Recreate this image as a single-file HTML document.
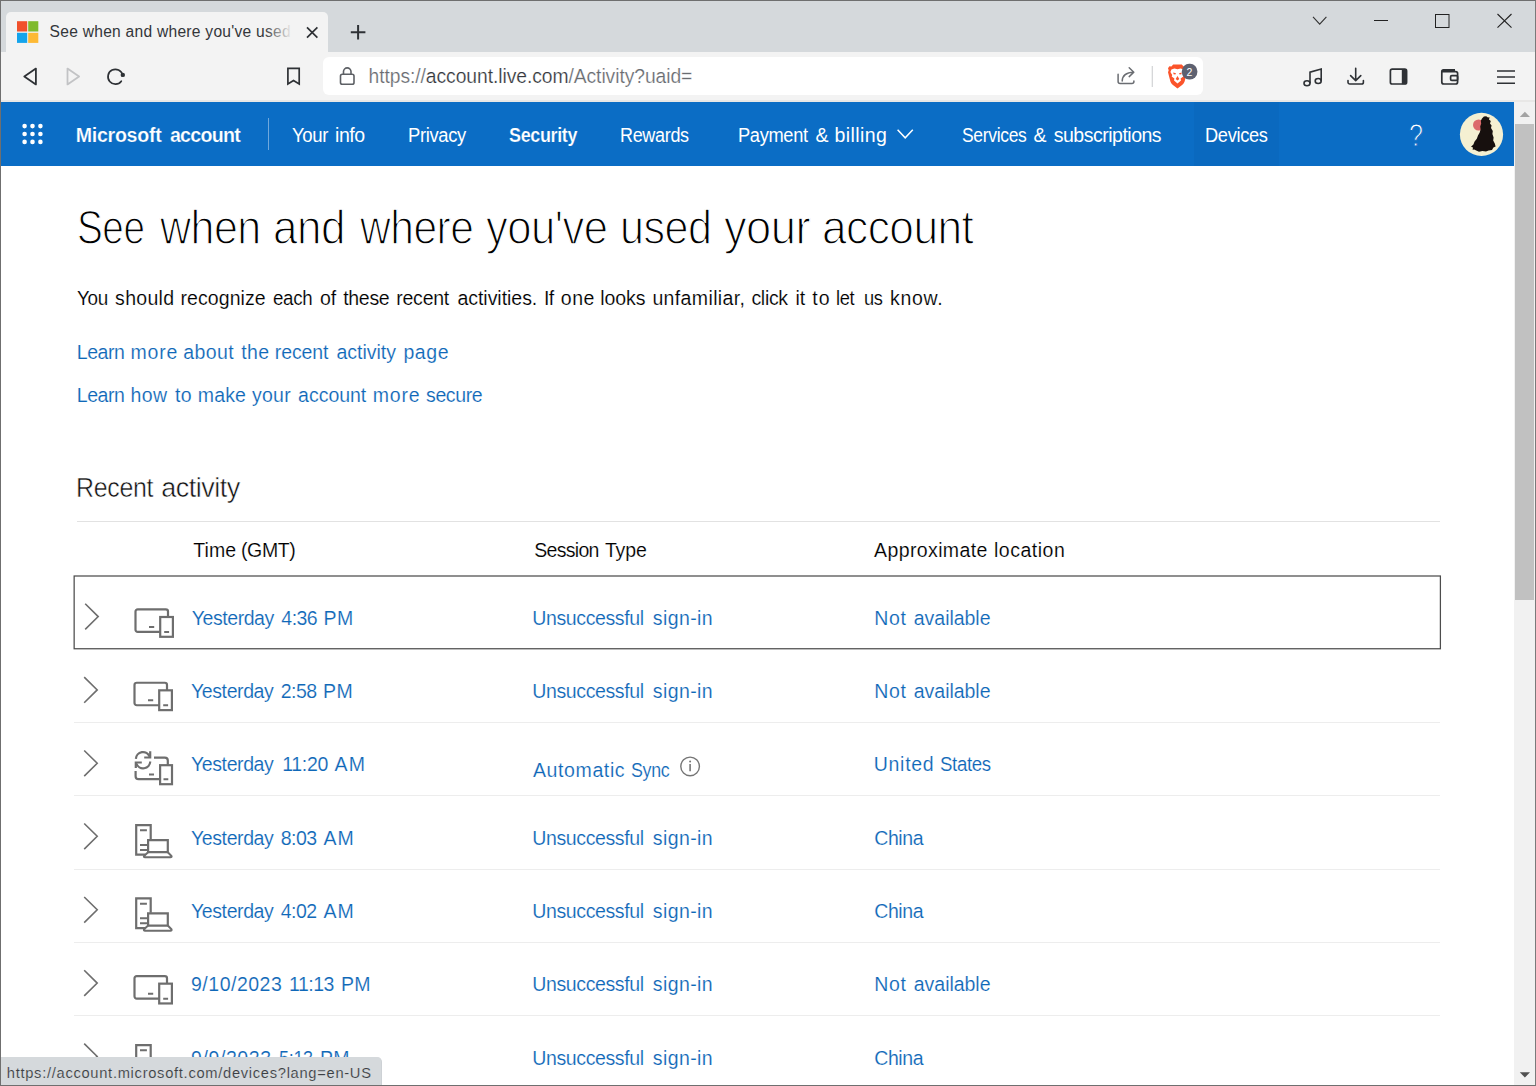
<!DOCTYPE html>
<html lang="en">
<head>
<meta charset="utf-8">
<title>See when and where you've used your account</title>
<style>
html,body{margin:0;padding:0;}
body{width:1536px;height:1086px;overflow:hidden;background:#fff;position:relative;font-family:"Liberation Sans",sans-serif;}
.a{position:absolute;}
.t{position:absolute;white-space:pre;}
#frame{left:0;top:0;width:1536px;height:1086px;box-sizing:border-box;border:1px solid #6f6f6f;border-right-color:#7a7a7a;z-index:50;pointer-events:none;}
#tabbar{left:0;top:0;width:1536px;height:52px;background:#d5d9dc;}
#tab{left:6px;top:12px;width:322px;height:40px;background:#f3f3f3;border-radius:5px 5px 0 0;}
#toolbar{left:0;top:52px;width:1536px;height:48px;background:#f3f3f3;border-bottom:2px solid #e8e7e6;}
#urlbox{left:323px;top:57px;width:880px;height:38px;background:#fff;border-radius:6px;}
#nav{left:1px;top:102px;width:1513px;height:64px;background:#0b6dc5;}
#navhover{left:1193.5px;top:102px;width:85px;height:64px;background:#0a69bf;}
#navsep{left:268px;top:118px;width:1px;height:32px;background:#6fa8dd;}
#sbtrack{left:1514px;top:102px;width:21px;height:983px;background:#f1f1f1;}
#sbthumb{left:1515px;top:124px;width:19px;height:476px;background:#c1c1c1;}
.hr{position:absolute;left:74px;width:1366px;height:1px;background:#ededed;}
#status{left:1px;top:1057px;width:381px;height:28px;background:#d5d9dc;border-top-right-radius:5px;border-right:1px solid #cdd1d5;box-sizing:border-box;}
svg{position:absolute;overflow:visible;}
</style>
</head>
<body>
<div class="a" id="tabbar"></div>
<div class="a" id="tab"></div>
<div class="a" id="toolbar"></div>
<div class="a" id="urlbox"></div>
<div class="a" id="nav"></div>
<div class="a" id="navhover"></div>
<div class="a" id="navsep"></div>
<div class="a" id="sbtrack"></div>
<div class="a" id="sbthumb"></div>
<svg width="1536" height="1086" viewBox="0 0 1536 1086" style="left:0;top:0">
<rect x="74.15" y="576" width="1366.25" height="72.75" fill="none" stroke="#4d4d4d" stroke-width="1.25"/>
<path d="M85.2 603.8 L98.2 616.6 L85.2 629.4" fill="none" stroke="#6e6e6e" stroke-width="1.6"/>
<path d="M84.2 677.1 L97.2 689.9 L84.2 702.7" fill="none" stroke="#6e6e6e" stroke-width="1.6"/>
<path d="M84.2 750.5 L97.2 763.3 L84.2 776.1" fill="none" stroke="#6e6e6e" stroke-width="1.6"/>
<path d="M84.2 823.5 L97.2 836.3 L84.2 849.1" fill="none" stroke="#6e6e6e" stroke-width="1.6"/>
<path d="M84.2 897.0 L97.2 909.8 L84.2 922.6" fill="none" stroke="#6e6e6e" stroke-width="1.6"/>
<path d="M84.2 970.3 L97.2 983.1 L84.2 995.9" fill="none" stroke="#6e6e6e" stroke-width="1.6"/>
<path d="M84.2 1043.6 L97.2 1056.4 L84.2 1069.2" fill="none" stroke="#6e6e6e" stroke-width="1.6"/>
<g transform="translate(0 0)" fill="none" stroke="#6e6e6e" stroke-width="2.2"><path d="M168 617 V611.6 a2.2 2.2 0 0 0 -2.2 -2.2 H137.7 a2.2 2.2 0 0 0 -2.2 2.2 V629.7 a2.2 2.2 0 0 0 2.2 2.2 H160"/><rect x="160.2" y="617" width="12.7" height="19.8"/><path d="M149 627 H154.2 M164.2 632 H169.1" stroke-width="2"/></g>
<g transform="translate(-1 73.33)" fill="none" stroke="#6e6e6e" stroke-width="2.2"><path d="M168 617 V611.6 a2.2 2.2 0 0 0 -2.2 -2.2 H137.7 a2.2 2.2 0 0 0 -2.2 2.2 V629.7 a2.2 2.2 0 0 0 2.2 2.2 H160"/><rect x="160.2" y="617" width="12.7" height="19.8"/><path d="M149 627 H154.2 M164.2 632 H169.1" stroke-width="2"/></g>
<g transform="translate(0 0)" fill="none" stroke="#6e6e6e" stroke-width="2.2"><path d="M154 757.6 H164.8 a3 3 0 0 1 3 3 V765"/><path d="M135.6 771 V776.2 a3 3 0 0 0 3 3 H160"/><rect x="160.1" y="765.2" width="11.9" height="19"/><path d="M149 774.6 H154 M163.5 779.2 H168.3" stroke-width="2"/><path d="M135.9 758.9 A7.1 7.1 0 0 1 149.6 756.6"/><path d="M150.2 761.4 A7.1 7.1 0 0 1 136.4 763.6"/><path d="M144.2 757.5 H150.2 V751.3" /><path d="M141.8 762.5 H135.8 V768" /></g>
<g transform="translate(0 0)" fill="none" stroke="#6e6e6e" stroke-width="2.2"><path d="M150.7 839.5 V825.1 H136.2 V854.7 H145.5"/><path d="M140 830.3 H146.9 M140 845 H147.4 M140 849.9 H147.4" stroke-width="2"/><path d="M148.1 852.2 V840.1 H167.8 V852.2 Z"/><path d="M148.1 852.2 L144 856 Q143.5 857.3 145 857.3 H170.5 Q172 857.3 171.5 856 L167.8 852.2" stroke-width="2"/></g>
<g transform="translate(0 73.33)" fill="none" stroke="#6e6e6e" stroke-width="2.2"><path d="M150.7 839.5 V825.1 H136.2 V854.7 H145.5"/><path d="M140 830.3 H146.9 M140 845 H147.4 M140 849.9 H147.4" stroke-width="2"/><path d="M148.1 852.2 V840.1 H167.8 V852.2 Z"/><path d="M148.1 852.2 L144 856 Q143.5 857.3 145 857.3 H170.5 Q172 857.3 171.5 856 L167.8 852.2" stroke-width="2"/></g>
<g transform="translate(-1 366.65)" fill="none" stroke="#6e6e6e" stroke-width="2.2"><path d="M168 617 V611.6 a2.2 2.2 0 0 0 -2.2 -2.2 H137.7 a2.2 2.2 0 0 0 -2.2 2.2 V629.7 a2.2 2.2 0 0 0 2.2 2.2 H160"/><rect x="160.2" y="617" width="12.7" height="19.8"/><path d="M149 627 H154.2 M164.2 632 H169.1" stroke-width="2"/></g>
<g transform="translate(0 219.99)" fill="none" stroke="#6e6e6e" stroke-width="2.2"><path d="M150.7 839.5 V825.1 H136.2 V854.7 H145.5"/><path d="M140 830.3 H146.9 M140 845 H147.4 M140 849.9 H147.4" stroke-width="2"/><path d="M148.1 852.2 V840.1 H167.8 V852.2 Z"/><path d="M148.1 852.2 L144 856 Q143.5 857.3 145 857.3 H170.5 Q172 857.3 171.5 856 L167.8 852.2" stroke-width="2"/></g>
<circle cx="690.1" cy="766.4" r="9.3" fill="none" stroke="#757575" stroke-width="1.4"/>
<path d="M690.1 763.9 V771.2" stroke="#757575" stroke-width="1.6"/><circle cx="690.1" cy="761.6" r="1" fill="#757575"/>
<circle cx="24.6" cy="126.1" r="2.3" fill="#fff"/>
<circle cx="24.6" cy="134" r="2.3" fill="#fff"/>
<circle cx="24.6" cy="141.9" r="2.3" fill="#fff"/>
<circle cx="32.5" cy="126.1" r="2.3" fill="#fff"/>
<circle cx="32.5" cy="134" r="2.3" fill="#fff"/>
<circle cx="32.5" cy="141.9" r="2.3" fill="#fff"/>
<circle cx="40.4" cy="126.1" r="2.3" fill="#fff"/>
<circle cx="40.4" cy="134" r="2.3" fill="#fff"/>
<circle cx="40.4" cy="141.9" r="2.3" fill="#fff"/>
<path d="M897.6 129.8 L905.2 137.8 L912.8 129.8" fill="none" stroke="#fff" stroke-width="1.5"/>
<circle cx="1481.5" cy="134.4" r="21.6" fill="#f5f0d2"/>
<circle cx="1478.6" cy="125" r="5.6" fill="#dc6a6c"/>
<path d="M1483.9 116.4 L1486.2 116.2 L1488 117.6 L1489.6 117.2 L1489 119.4 L1490.8 121 L1490 123.4 L1491.6 125.6 L1491 128 L1492.8 131 L1492.4 134 L1493.6 137.4 L1493.2 140.6 L1494.8 143.6 L1495.6 146.4 L1493.4 147.6 L1492 150 L1488.6 150.4 L1486 151.6 L1482.4 151 L1479 151.8 L1476.2 150.6 L1474.2 149.4 L1472.6 149.8 L1473 147.6 L1471 146.8 L1473.4 144.4 L1474.6 141.4 L1476.8 138.8 L1478 135.6 L1479.6 132.8 L1480.6 129.6 L1480.2 126.6 L1481.2 123.6 L1480.8 120.8 L1482 118.6 Z" fill="#17100e"/>
<rect x="17" y="21.2" width="10.2" height="10.3" fill="#f0502b"/><rect x="28.2" y="21.2" width="10.1" height="10.3" fill="#7fba2c"/><rect x="17" y="32.8" width="10.2" height="10.1" fill="#14a4ec"/><rect x="28.2" y="32.8" width="10.1" height="10.1" fill="#fdb934"/>
<path d="M307 27.4 L317.4 37.7 M317.4 27.4 L307 37.7" stroke="#2e3135" stroke-width="1.7" fill="none"/>
<path d="M350.8 32.2 H365.4 M358.1 24.9 V39.5" stroke="#2e3135" stroke-width="2" fill="none"/>
<path d="M1313 16.8 L1319.7 24.2 L1326.4 16.8" stroke="#333" stroke-width="1.1" fill="none"/>
<path d="M1374 20.5 H1388" stroke="#222" stroke-width="1"/>
<rect x="1435.5" y="14.5" width="13.5" height="13" stroke="#222" stroke-width="1" fill="none"/>
<path d="M1497.5 14 L1511.5 27.7 M1511.5 14 L1497.5 27.7" stroke="#222" stroke-width="1.1" fill="none"/>
<path d="M24.3 76.5 L35.9 68.6 V84.4 Z" stroke="#2e3135" stroke-width="1.8" fill="none" stroke-linejoin="round"/>
<path d="M79.1 76.5 L67.5 68.6 V84.4 Z" stroke="#c2c3c5" stroke-width="1.8" fill="none" stroke-linejoin="round"/>
<path d="M122.6 75 A7.4 7.4 0 1 0 121.3 81.2" stroke="#2e3135" stroke-width="1.7" fill="none" stroke-linecap="round"/><circle cx="122.8" cy="74.9" r="2.2" fill="#2e3135"/>
<path d="M287.9 68.3 H299.2 V84 L293.5 80.6 L287.9 84 Z" stroke="#2e3135" stroke-width="1.7" fill="none" stroke-linejoin="miter"/>
<rect x="340.5" y="74.3" width="13.5" height="9.9" rx="1.8" stroke="#5d6065" stroke-width="1.6" fill="none"/><path d="M343.5 74.3 V71.6 a3.75 3.75 0 0 1 7.5 0 V74.3" stroke="#5d6065" stroke-width="1.6" fill="none"/>
<path d="M1118.1 74.2 V81.5 a2 2 0 0 0 2 2 H1131.9 a2 2 0 0 0 2 -2 V81" stroke="#6a6d72" stroke-width="1.5" fill="none" stroke-linecap="round"/>
<path d="M1122.2 81 Q1122.5 72.5 1133.6 72.2 M1129.2 67.8 L1133.8 72.2 L1129.2 76.6" stroke="#6a6d72" stroke-width="1.5" fill="none" stroke-linecap="round" stroke-linejoin="round"/>
<path d="M1152.3 66 V87" stroke="#d2d3d5" stroke-width="1.2"/>
<path d="M1177.5 64.6 L1181.8 64.6 L1183.6 66.6 L1185.6 66.2 L1187 68.2 L1186.3 70.2 L1187 72.2 L1184.6 81.6 Q1184 83.6 1182.4 84.8 L1177.5 88.6 L1172.6 84.8 Q1171 83.6 1170.4 81.6 L1168 72.2 L1168.7 70.2 L1168 68.2 L1169.4 66.2 L1171.4 66.6 L1173.2 64.6 Z" fill="#fb542b"/>
<path d="M1177.5 69.2 L1180.6 68.6 L1183.6 69.6 L1184.6 72 L1182.8 75 L1183.3 76.6 L1180.6 78.6 L1181 80.4 L1177.5 83.4 L1174 80.4 L1174.4 78.6 L1171.7 76.6 L1172.2 75 L1170.4 72 L1171.4 69.6 L1174.4 68.6 Z" fill="#fff"/>
<path d="M1173.2 72.4 L1176 73.2 L1175.4 74.6 L1173.6 74.2 Z M1181.8 72.4 L1179 73.2 L1179.6 74.6 L1181.4 74.2 Z M1177.5 76 L1179.3 79 L1177.5 80.4 L1175.7 79 Z" fill="#fb542b"/>
<rect x="1181.8" y="63.8" width="15.6" height="15.6" rx="7.4" fill="#5e6170"/>
<g stroke="#2e3135" stroke-width="1.6" fill="none"><ellipse cx="1307" cy="83.2" rx="3" ry="2.5"/><ellipse cx="1318.2" cy="81" rx="3" ry="2.5"/><path d="M1310 83.2 V72.2 L1321.2 69 V81"/></g>
<path d="M1355.7 68.2 V80.4 M1350.6 75.6 L1355.7 80.6 L1360.8 75.6 M1348 80.6 V82.2 a1.8 1.8 0 0 0 1.8 1.8 H1361.6 a1.8 1.8 0 0 0 1.8 -1.8 V80.6" stroke="#2e3135" stroke-width="1.6" fill="none" stroke-linecap="round" stroke-linejoin="round"/>
<rect x="1390.4" y="69.1" width="16.2" height="14.9" rx="1.8" stroke="#2e3135" stroke-width="1.7" fill="none"/><path d="M1401.8 69 H1405 a1.8 1.8 0 0 1 1.8 1.8 V82.4 a1.8 1.8 0 0 1 -1.8 1.8 H1401.8 Z" fill="#2e3135"/>
<g stroke="#2e3135" stroke-width="1.7" fill="none"><path d="M1441.8 71.6 V82 a2 2 0 0 0 2 2 H1455.6 a2 2 0 0 0 2 -2 V73.6 a2 2 0 0 0 -2 -2 H1441.8 a1.6 1.6 0 0 1 1.6 -1.7 H1455"/><rect x="1450.6" y="75.6" width="7" height="4.8" rx="1.2"/></g>
<path d="M1497 70.9 H1515 M1497 77.1 H1515 M1497 83.2 H1515" stroke="#2e3135" stroke-width="1.5"/>
<path d="M1519.8 117 L1524.9 111.7 L1530 117 Z" fill="#a3a3a3"/>
<path d="M1519.8 1072.2 L1530 1072.2 L1524.9 1077.4 Z" fill="#505050"/>
</svg>
<div class="hr" style="top:521px;left:77px;width:1363px;background:#e2e2e2"></div>
<div class="hr" style="top:722px"></div>
<div class="hr" style="top:795px"></div>
<div class="hr" style="top:869px"></div>
<div class="hr" style="top:942px"></div>
<div class="hr" style="top:1015px"></div>
<div><span class="t" style="left:49.60px;top:24.00px;font-size:15.6px;line-height:15.6px;color:#33363a;letter-spacing:0.258px;">See when and where you've used</span></div>
<div><span class="t" style="left:368.50px;top:67.00px;font-size:19.3px;line-height:19.3px;color:#696c71;letter-spacing:-0.065px;-webkit-text-stroke:0.2px #fff;">https://<span style="color:#36393e">account.live.com</span>/Activity?uaid=</span></div>
<div><span class="t" style="left:75.70px;top:126.00px;font-size:19.6px;line-height:19.6px;color:#fff;letter-spacing:-0.268px;font-weight:700;-webkit-text-stroke:0.2px #0b6dc5;">Microsoft</span> <span class="t" style="left:169.90px;top:126.00px;font-size:19.6px;line-height:19.6px;color:#fff;letter-spacing:-0.717px;font-weight:700;-webkit-text-stroke:0.2px #0b6dc5;">account</span></div>
<div><span class="t" style="left:291.70px;top:126.00px;font-size:19.5px;line-height:19.5px;color:#fff;letter-spacing:-0.35px;transform:scaleX(0.9534);transform-origin:0 0;">Your</span> <span class="t" style="left:335.00px;top:126.00px;font-size:19.5px;line-height:19.5px;color:#fff;letter-spacing:-0.436px;">info</span></div>
<div><span class="t" style="left:407.76px;top:126.00px;font-size:19.5px;line-height:19.5px;color:#fff;letter-spacing:-0.35px;transform:scaleX(0.9413);transform-origin:0 0;">Privacy</span></div>
<div><span class="t" style="left:509.21px;top:126.00px;font-size:19.6px;line-height:19.6px;color:#fff;letter-spacing:-0.35px;transform:scaleX(0.9147);transform-origin:0 0;font-weight:700;-webkit-text-stroke:0.2px #0b6dc5;">Security</span></div>
<div><span class="t" style="left:620.38px;top:126.00px;font-size:19.5px;line-height:19.5px;color:#fff;letter-spacing:-0.35px;transform:scaleX(0.9230);transform-origin:0 0;">Rewards</span></div>
<div><span class="t" style="left:737.96px;top:126.00px;font-size:19.5px;line-height:19.5px;color:#fff;letter-spacing:-0.35px;transform:scaleX(0.9364);transform-origin:0 0;">Payment</span> <span class="t" style="left:815.40px;top:126.00px;font-size:19.5px;line-height:19.5px;color:#fff;">&amp;</span> <span class="t" style="left:834.50px;top:126.00px;font-size:19.5px;line-height:19.5px;color:#fff;letter-spacing:0.395px;">billing</span></div>
<div><span class="t" style="left:961.80px;top:126.00px;font-size:19.5px;line-height:19.5px;color:#fff;letter-spacing:-0.35px;transform:scaleX(0.8969);transform-origin:0 0;">Services</span> <span class="t" style="left:1033.40px;top:126.00px;font-size:19.5px;line-height:19.5px;color:#fff;">&amp;</span> <span class="t" style="left:1053.70px;top:126.00px;font-size:19.5px;line-height:19.5px;color:#fff;letter-spacing:-0.489px;">subscriptions</span></div>
<div><span class="t" style="left:1205.06px;top:126.00px;font-size:19.5px;line-height:19.5px;color:#fff;letter-spacing:-0.35px;transform:scaleX(0.9352);transform-origin:0 0;">Devices</span></div>
<div><span class="t" style="left:1409.00px;top:120.00px;font-size:31.5px;line-height:31.5px;color:#fff;-webkit-text-stroke:1px #0b6dc5;transform:scaleX(0.8);transform-origin:0 0;">?</span></div>
<div><span class="t" style="left:76.87px;top:203.00px;font-size:49px;line-height:49px;color:#000;letter-spacing:-0.6px;transform:scaleX(0.7905);transform-origin:0 0;-webkit-text-stroke:1.4px #fff;">See</span> <span class="t" style="left:159.86px;top:203.00px;font-size:49px;line-height:49px;color:#000;letter-spacing:-0.6px;transform:scaleX(0.8776);transform-origin:0 0;-webkit-text-stroke:1.4px #fff;">when</span> <span class="t" style="left:272.77px;top:203.00px;font-size:49px;line-height:49px;color:#000;letter-spacing:-0.6px;transform:scaleX(0.8984);transform-origin:0 0;-webkit-text-stroke:1.4px #fff;">and</span> <span class="t" style="left:359.66px;top:203.00px;font-size:49px;line-height:49px;color:#000;letter-spacing:-0.6px;transform:scaleX(0.8693);transform-origin:0 0;-webkit-text-stroke:1.4px #fff;">where</span> <span class="t" style="left:485.88px;top:203.00px;font-size:49px;line-height:49px;color:#000;letter-spacing:-0.6px;transform:scaleX(0.8906);transform-origin:0 0;-webkit-text-stroke:1.4px #fff;">you've</span> <span class="t" style="left:619.64px;top:203.00px;font-size:49px;line-height:49px;color:#000;letter-spacing:-0.6px;transform:scaleX(0.8802);transform-origin:0 0;-webkit-text-stroke:1.4px #fff;">used</span> <span class="t" style="left:723.65px;top:203.00px;font-size:49px;line-height:49px;color:#000;letter-spacing:-0.6px;transform:scaleX(0.9247);transform-origin:0 0;-webkit-text-stroke:1.4px #fff;">your</span> <span class="t" style="left:821.56px;top:203.00px;font-size:49px;line-height:49px;color:#000;letter-spacing:-0.6px;transform:scaleX(0.9042);transform-origin:0 0;-webkit-text-stroke:1.4px #fff;">account</span></div>
<div><span class="t" style="left:77.23px;top:289.00px;font-size:19.5px;line-height:19.5px;color:#000;letter-spacing:-0.35px;transform:scaleX(0.9676);transform-origin:0 0;-webkit-text-stroke:0.15px #fff;">You</span> <span class="t" style="left:115.12px;top:289.00px;font-size:19.5px;line-height:19.5px;color:#000;letter-spacing:0.285px;-webkit-text-stroke:0.15px #fff;">should</span> <span class="t" style="left:180.43px;top:289.00px;font-size:19.5px;line-height:19.5px;color:#000;letter-spacing:0.092px;-webkit-text-stroke:0.15px #fff;">recognize</span> <span class="t" style="left:273.03px;top:289.00px;font-size:19.5px;line-height:19.5px;color:#000;letter-spacing:-0.35px;transform:scaleX(0.9590);transform-origin:0 0;-webkit-text-stroke:0.15px #fff;">each</span> <span class="t" style="left:319.93px;top:289.00px;font-size:19.5px;line-height:19.5px;color:#000;letter-spacing:0.002px;-webkit-text-stroke:0.15px #fff;">of</span> <span class="t" style="left:343.23px;top:289.00px;font-size:19.5px;line-height:19.5px;color:#000;letter-spacing:-0.315px;-webkit-text-stroke:0.15px #fff;">these</span> <span class="t" style="left:396.23px;top:289.00px;font-size:19.5px;line-height:19.5px;color:#000;letter-spacing:-0.227px;-webkit-text-stroke:0.15px #fff;">recent</span> <span class="t" style="left:457.43px;top:289.00px;font-size:19.5px;line-height:19.5px;color:#000;letter-spacing:-0.034px;-webkit-text-stroke:0.15px #fff;">activities.</span> <span class="t" style="left:543.92px;top:289.00px;font-size:19.5px;line-height:19.5px;color:#000;letter-spacing:-0.676px;-webkit-text-stroke:0.15px #fff;">If</span> <span class="t" style="left:560.72px;top:289.00px;font-size:19.5px;line-height:19.5px;color:#000;letter-spacing:0.574px;-webkit-text-stroke:0.15px #fff;">one</span> <span class="t" style="left:600.17px;top:289.00px;font-size:19.5px;line-height:19.5px;color:#000;letter-spacing:-0.070px;-webkit-text-stroke:0.15px #fff;">looks</span> <span class="t" style="left:652.42px;top:289.00px;font-size:19.5px;line-height:19.5px;color:#000;letter-spacing:0.369px;-webkit-text-stroke:0.15px #fff;">unfamiliar,</span> <span class="t" style="left:751.42px;top:289.00px;font-size:19.5px;line-height:19.5px;color:#000;letter-spacing:-0.305px;-webkit-text-stroke:0.15px #fff;">click</span> <span class="t" style="left:795.62px;top:289.00px;font-size:19.5px;line-height:19.5px;color:#000;letter-spacing:-0.282px;-webkit-text-stroke:0.15px #fff;">it</span> <span class="t" style="left:812.22px;top:289.00px;font-size:19.5px;line-height:19.5px;color:#000;letter-spacing:1.029px;-webkit-text-stroke:0.15px #fff;">to</span> <span class="t" style="left:836.49px;top:289.00px;font-size:19.5px;line-height:19.5px;color:#000;letter-spacing:-0.35px;transform:scaleX(0.9358);transform-origin:0 0;-webkit-text-stroke:0.15px #fff;">let</span> <span class="t" style="left:863.59px;top:289.00px;font-size:19.5px;line-height:19.5px;color:#000;letter-spacing:-0.35px;transform:scaleX(0.9349);transform-origin:0 0;-webkit-text-stroke:0.15px #fff;">us</span> <span class="t" style="left:889.92px;top:289.00px;font-size:19.5px;line-height:19.5px;color:#000;letter-spacing:0.723px;-webkit-text-stroke:0.15px #fff;">know.</span></div>
<div><span class="t" style="left:76.72px;top:343.00px;font-size:19.5px;line-height:19.5px;color:#0f68b8;letter-spacing:-0.420px;-webkit-text-stroke:0.15px #fff;">Learn</span> <span class="t" style="left:130.53px;top:343.00px;font-size:19.5px;line-height:19.5px;color:#0f68b8;letter-spacing:0.786px;-webkit-text-stroke:0.15px #fff;">more</span> <span class="t" style="left:183.33px;top:343.00px;font-size:19.5px;line-height:19.5px;color:#0f68b8;letter-spacing:0.414px;-webkit-text-stroke:0.15px #fff;">about</span> <span class="t" style="left:241.23px;top:343.00px;font-size:19.5px;line-height:19.5px;color:#0f68b8;letter-spacing:0.393px;-webkit-text-stroke:0.15px #fff;">the</span> <span class="t" style="left:274.73px;top:343.00px;font-size:19.5px;line-height:19.5px;color:#0f68b8;letter-spacing:-0.087px;-webkit-text-stroke:0.15px #fff;">recent</span> <span class="t" style="left:336.43px;top:343.00px;font-size:19.5px;line-height:19.5px;color:#0f68b8;letter-spacing:-0.001px;-webkit-text-stroke:0.15px #fff;">activity</span> <span class="t" style="left:403.43px;top:343.00px;font-size:19.5px;line-height:19.5px;color:#0f68b8;letter-spacing:0.601px;-webkit-text-stroke:0.15px #fff;">page</span></div>
<div><span class="t" style="left:76.72px;top:386.00px;font-size:19.5px;line-height:19.5px;color:#0f68b8;letter-spacing:-0.420px;-webkit-text-stroke:0.15px #fff;">Learn</span> <span class="t" style="left:130.53px;top:386.00px;font-size:19.5px;line-height:19.5px;color:#0f68b8;letter-spacing:0.426px;-webkit-text-stroke:0.15px #fff;">how</span> <span class="t" style="left:174.93px;top:386.00px;font-size:19.5px;line-height:19.5px;color:#0f68b8;letter-spacing:0.529px;-webkit-text-stroke:0.15px #fff;">to</span> <span class="t" style="left:197.73px;top:386.00px;font-size:19.5px;line-height:19.5px;color:#0f68b8;letter-spacing:0.169px;-webkit-text-stroke:0.15px #fff;">make</span> <span class="t" style="left:251.93px;top:386.00px;font-size:19.5px;line-height:19.5px;color:#0f68b8;letter-spacing:0.302px;-webkit-text-stroke:0.15px #fff;">your</span> <span class="t" style="left:298.12px;top:386.00px;font-size:19.5px;line-height:19.5px;color:#0f68b8;letter-spacing:-0.024px;-webkit-text-stroke:0.15px #fff;">account</span> <span class="t" style="left:372.73px;top:386.00px;font-size:19.5px;line-height:19.5px;color:#0f68b8;letter-spacing:0.786px;-webkit-text-stroke:0.15px #fff;">more</span> <span class="t" style="left:426.03px;top:386.00px;font-size:19.5px;line-height:19.5px;color:#0f68b8;letter-spacing:-0.387px;-webkit-text-stroke:0.15px #fff;">secure</span></div>
<div><span class="t" style="left:76.12px;top:475.00px;font-size:27px;line-height:27px;color:#111;letter-spacing:-0.35px;transform:scaleX(0.9241);transform-origin:0 0;-webkit-text-stroke:0.5px #fff;">Recent</span> <span class="t" style="left:161.35px;top:475.00px;font-size:27px;line-height:27px;color:#111;letter-spacing:-0.504px;-webkit-text-stroke:0.5px #fff;">activity</span></div>
<div><span class="t" style="left:193.23px;top:541.00px;font-size:19.5px;line-height:19.5px;color:#000;letter-spacing:0.095px;-webkit-text-stroke:0.15px #fff;">Time</span> <span class="t" style="left:241.03px;top:541.00px;font-size:19.5px;line-height:19.5px;color:#000;letter-spacing:-0.392px;-webkit-text-stroke:0.15px #fff;">(GMT)</span></div>
<div><span class="t" style="left:534.22px;top:541.00px;font-size:19.5px;line-height:19.5px;color:#000;letter-spacing:-0.697px;-webkit-text-stroke:0.15px #fff;">Session</span> <span class="t" style="left:604.92px;top:541.00px;font-size:19.5px;line-height:19.5px;color:#000;letter-spacing:-0.129px;-webkit-text-stroke:0.15px #fff;">Type</span></div>
<div><span class="t" style="left:874.12px;top:541.00px;font-size:19.5px;line-height:19.5px;color:#000;letter-spacing:0.373px;-webkit-text-stroke:0.15px #fff;">Approximate</span> <span class="t" style="left:994.02px;top:541.00px;font-size:19.5px;line-height:19.5px;color:#000;letter-spacing:0.511px;-webkit-text-stroke:0.15px #fff;">location</span></div>
<div><span class="t" style="left:191.83px;top:609.00px;font-size:19.5px;line-height:19.5px;color:#0f68b8;letter-spacing:-0.452px;-webkit-text-stroke:0.15px #fff;">Yesterday</span> <span class="t" style="left:281.32px;top:609.00px;font-size:19.5px;line-height:19.5px;color:#0f68b8;letter-spacing:-0.519px;-webkit-text-stroke:0.15px #fff;">4:36</span> <span class="t" style="left:323.62px;top:609.00px;font-size:19.5px;line-height:19.5px;color:#0f68b8;letter-spacing:0.444px;-webkit-text-stroke:0.15px #fff;">PM</span></div>
<div><span class="t" style="left:532.22px;top:609.00px;font-size:19.5px;line-height:19.5px;color:#0f68b8;letter-spacing:-0.371px;-webkit-text-stroke:0.15px #fff;">Unsuccessful</span> <span class="t" style="left:652.82px;top:609.00px;font-size:19.5px;line-height:19.5px;color:#0f68b8;letter-spacing:0.390px;-webkit-text-stroke:0.15px #fff;">sign-in</span></div>
<div><span class="t" style="left:874.22px;top:609.00px;font-size:19.5px;line-height:19.5px;color:#0f68b8;letter-spacing:0.704px;-webkit-text-stroke:0.15px #fff;">Not</span> <span class="t" style="left:913.82px;top:609.00px;font-size:19.5px;line-height:19.5px;color:#0f68b8;letter-spacing:-0.036px;-webkit-text-stroke:0.15px #fff;">available</span></div>
<div><span class="t" style="left:191.03px;top:682.00px;font-size:19.5px;line-height:19.5px;color:#0f68b8;letter-spacing:-0.402px;-webkit-text-stroke:0.15px #fff;">Yesterday</span> <span class="t" style="left:280.82px;top:682.00px;font-size:19.5px;line-height:19.5px;color:#0f68b8;letter-spacing:-0.586px;-webkit-text-stroke:0.15px #fff;">2:58</span> <span class="t" style="left:322.93px;top:682.00px;font-size:19.5px;line-height:19.5px;color:#0f68b8;letter-spacing:0.544px;-webkit-text-stroke:0.15px #fff;">PM</span></div>
<div><span class="t" style="left:532.22px;top:682.00px;font-size:19.5px;line-height:19.5px;color:#0f68b8;letter-spacing:-0.371px;-webkit-text-stroke:0.15px #fff;">Unsuccessful</span> <span class="t" style="left:652.82px;top:682.00px;font-size:19.5px;line-height:19.5px;color:#0f68b8;letter-spacing:0.390px;-webkit-text-stroke:0.15px #fff;">sign-in</span></div>
<div><span class="t" style="left:874.22px;top:682.00px;font-size:19.5px;line-height:19.5px;color:#0f68b8;letter-spacing:0.704px;-webkit-text-stroke:0.15px #fff;">Not</span> <span class="t" style="left:913.82px;top:682.00px;font-size:19.5px;line-height:19.5px;color:#0f68b8;letter-spacing:-0.036px;-webkit-text-stroke:0.15px #fff;">available</span></div>
<div><span class="t" style="left:191.03px;top:755.00px;font-size:19.5px;line-height:19.5px;color:#0f68b8;letter-spacing:-0.402px;-webkit-text-stroke:0.15px #fff;">Yesterday</span> <span class="t" style="left:282.32px;top:755.00px;font-size:19.5px;line-height:19.5px;color:#0f68b8;letter-spacing:-0.341px;-webkit-text-stroke:0.15px #fff;">11:20</span> <span class="t" style="left:334.53px;top:755.00px;font-size:19.5px;line-height:19.5px;color:#0f68b8;letter-spacing:1.244px;-webkit-text-stroke:0.15px #fff;">AM</span></div>
<div><span class="t" style="left:532.92px;top:761.00px;font-size:19.5px;line-height:19.5px;color:#0f68b8;letter-spacing:0.625px;-webkit-text-stroke:0.15px #fff;">Automatic</span> <span class="t" style="left:630.63px;top:761.00px;font-size:19.5px;line-height:19.5px;color:#0f68b8;letter-spacing:-0.35px;transform:scaleX(0.9149);transform-origin:0 0;-webkit-text-stroke:0.15px #fff;">Sync</span></div>
<div><span class="t" style="left:873.72px;top:755.00px;font-size:19.5px;line-height:19.5px;color:#0f68b8;letter-spacing:0.724px;-webkit-text-stroke:0.15px #fff;">United</span> <span class="t" style="left:939.83px;top:755.00px;font-size:19.5px;line-height:19.5px;color:#0f68b8;letter-spacing:-0.35px;transform:scaleX(0.9563);transform-origin:0 0;-webkit-text-stroke:0.15px #fff;">States</span></div>
<div><span class="t" style="left:191.03px;top:829.00px;font-size:19.5px;line-height:19.5px;color:#0f68b8;letter-spacing:-0.402px;-webkit-text-stroke:0.15px #fff;">Yesterday</span> <span class="t" style="left:280.82px;top:829.00px;font-size:19.5px;line-height:19.5px;color:#0f68b8;letter-spacing:-0.586px;-webkit-text-stroke:0.15px #fff;">8:03</span> <span class="t" style="left:323.43px;top:829.00px;font-size:19.5px;line-height:19.5px;color:#0f68b8;letter-spacing:1.144px;-webkit-text-stroke:0.15px #fff;">AM</span></div>
<div><span class="t" style="left:532.22px;top:829.00px;font-size:19.5px;line-height:19.5px;color:#0f68b8;letter-spacing:-0.371px;-webkit-text-stroke:0.15px #fff;">Unsuccessful</span> <span class="t" style="left:652.82px;top:829.00px;font-size:19.5px;line-height:19.5px;color:#0f68b8;letter-spacing:0.390px;-webkit-text-stroke:0.15px #fff;">sign-in</span></div>
<div><span class="t" style="left:874.22px;top:829.00px;font-size:19.5px;line-height:19.5px;color:#0f68b8;letter-spacing:-0.415px;-webkit-text-stroke:0.15px #fff;">China</span></div>
<div><span class="t" style="left:191.03px;top:902.00px;font-size:19.5px;line-height:19.5px;color:#0f68b8;letter-spacing:-0.402px;-webkit-text-stroke:0.15px #fff;">Yesterday</span> <span class="t" style="left:280.82px;top:902.00px;font-size:19.5px;line-height:19.5px;color:#0f68b8;letter-spacing:-0.586px;-webkit-text-stroke:0.15px #fff;">4:02</span> <span class="t" style="left:323.43px;top:902.00px;font-size:19.5px;line-height:19.5px;color:#0f68b8;letter-spacing:1.144px;-webkit-text-stroke:0.15px #fff;">AM</span></div>
<div><span class="t" style="left:532.22px;top:902.00px;font-size:19.5px;line-height:19.5px;color:#0f68b8;letter-spacing:-0.371px;-webkit-text-stroke:0.15px #fff;">Unsuccessful</span> <span class="t" style="left:652.82px;top:902.00px;font-size:19.5px;line-height:19.5px;color:#0f68b8;letter-spacing:0.390px;-webkit-text-stroke:0.15px #fff;">sign-in</span></div>
<div><span class="t" style="left:874.22px;top:902.00px;font-size:19.5px;line-height:19.5px;color:#0f68b8;letter-spacing:-0.415px;-webkit-text-stroke:0.15px #fff;">China</span></div>
<div><span class="t" style="left:191.03px;top:975.00px;font-size:19.5px;line-height:19.5px;color:#0f68b8;letter-spacing:0.504px;-webkit-text-stroke:0.15px #fff;">9/10/2023</span> <span class="t" style="left:289.03px;top:975.00px;font-size:19.5px;line-height:19.5px;color:#0f68b8;letter-spacing:-0.516px;-webkit-text-stroke:0.15px #fff;">11:13</span> <span class="t" style="left:340.93px;top:975.00px;font-size:19.5px;line-height:19.5px;color:#0f68b8;letter-spacing:0.444px;-webkit-text-stroke:0.15px #fff;">PM</span></div>
<div><span class="t" style="left:532.22px;top:975.00px;font-size:19.5px;line-height:19.5px;color:#0f68b8;letter-spacing:-0.371px;-webkit-text-stroke:0.15px #fff;">Unsuccessful</span> <span class="t" style="left:652.82px;top:975.00px;font-size:19.5px;line-height:19.5px;color:#0f68b8;letter-spacing:0.390px;-webkit-text-stroke:0.15px #fff;">sign-in</span></div>
<div><span class="t" style="left:874.22px;top:975.00px;font-size:19.5px;line-height:19.5px;color:#0f68b8;letter-spacing:0.704px;-webkit-text-stroke:0.15px #fff;">Not</span> <span class="t" style="left:913.82px;top:975.00px;font-size:19.5px;line-height:19.5px;color:#0f68b8;letter-spacing:-0.036px;-webkit-text-stroke:0.15px #fff;">available</span></div>
<div><span class="t" style="left:191.03px;top:1049.00px;font-size:19.5px;line-height:19.5px;color:#0f68b8;letter-spacing:0.584px;-webkit-text-stroke:0.15px #fff;">9/9/2023</span> <span class="t" style="left:279.23px;top:1049.00px;font-size:19.5px;line-height:19.5px;color:#0f68b8;letter-spacing:-0.35px;transform:scaleX(0.9246);transform-origin:0 0;-webkit-text-stroke:0.15px #fff;">5:13</span> <span class="t" style="left:319.93px;top:1049.00px;font-size:19.5px;line-height:19.5px;color:#0f68b8;letter-spacing:0.444px;-webkit-text-stroke:0.15px #fff;">PM</span></div>
<div><span class="t" style="left:532.22px;top:1049.00px;font-size:19.5px;line-height:19.5px;color:#0f68b8;letter-spacing:-0.371px;-webkit-text-stroke:0.15px #fff;">Unsuccessful</span> <span class="t" style="left:652.82px;top:1049.00px;font-size:19.5px;line-height:19.5px;color:#0f68b8;letter-spacing:0.390px;-webkit-text-stroke:0.15px #fff;">sign-in</span></div>
<div><span class="t" style="left:874.22px;top:1049.00px;font-size:19.5px;line-height:19.5px;color:#0f68b8;letter-spacing:-0.415px;-webkit-text-stroke:0.15px #fff;">China</span></div>
<div><span class="t" style="left:6.80px;top:1066.00px;font-size:14.7px;line-height:14.7px;color:#3c3f44;letter-spacing:0.705px;z-index:5;-webkit-text-stroke:0.15px #d5d9dc;">https://account.microsoft.com/devices?lang=en-US</span></div>
<div><span class="t" style="left:1186.50px;top:67.00px;font-size:10.5px;line-height:10.5px;color:#fff;">2</span></div>
<div class="a" style="left:264px;top:16px;width:30px;height:32px;background:linear-gradient(to right,rgba(243,243,243,0),rgba(243,243,243,.95) 90%)"></div>
<div class="a" id="status"></div>
<!--STATUSTEXT-->
<div class="a" id="frame"></div>
</body>
</html>
